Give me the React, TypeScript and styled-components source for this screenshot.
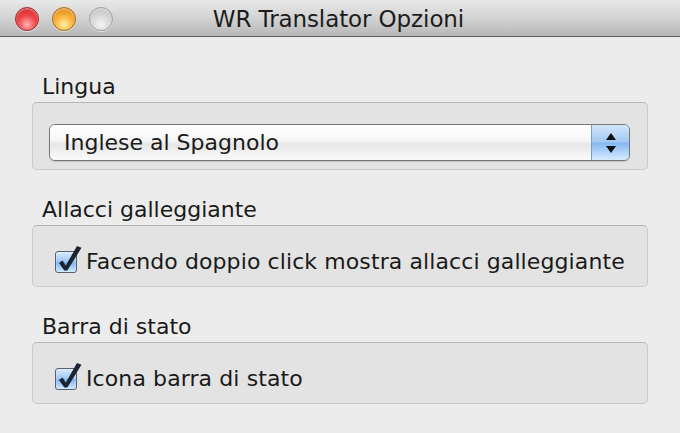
import styled, { createGlobalStyle } from "styled-components";

const GlobalStyle = createGlobalStyle`
  html, body {
    margin: 0;
    padding: 0;
    background: #ececec;
  }
  body {
    font-family: "DejaVu Sans", "Liberation Sans", sans-serif;
    color: #1a1a1a;
  }
`;

const Window = styled.div`
  width: 680px;
  height: 433px;
  background: #ececec;
  display: flex;
  flex-direction: column;
  overflow: hidden;
`;

const TitleBar = styled.div`
  height: 36px;
  flex-shrink: 0;
  position: relative;
  display: flex;
  align-items: center;
  justify-content: center;
  background: linear-gradient(#e9e9e9, #d2d2d2 50%, #b8b8b8);
  border-bottom: 1px solid #5e5e5e;
`;

const Lights = styled.div`
  position: absolute;
  left: 15px;
  top: 7px;
  display: flex;
  gap: 13px;
`;

const Light = styled.div<{ $tone: "red" | "orange" | "gray" }>`
  width: 24px;
  height: 24px;
  border-radius: 50%;
  box-sizing: border-box;
  border: 1px solid
    ${(p) =>
      p.$tone === "red" ? "#9c2a2a" : p.$tone === "orange" ? "#a5681a" : "#a0a0a0"};
  background: ${(p) =>
    p.$tone === "red"
      ? "radial-gradient(circle at 50% 75%, #ffb3b3 0%, #f0464a 45%, #c41d24 100%)"
      : p.$tone === "orange"
      ? "radial-gradient(circle at 50% 75%, #fff0a0 0%, #f8b23a 45%, #d37a12 100%)"
      : "radial-gradient(circle at 50% 75%, #f4f4f4 0%, #d6d6d6 50%, #b8b8b8 100%)"};
  box-shadow: inset 0 1px 2px rgba(255, 255, 255, 0.6), 0 1px 0 rgba(255, 255, 255, 0.5);
`;

const Title = styled.div`
  font-size: 23px;
  color: #1c1c1c;
  letter-spacing: -0.1px;
  padding-right: 3px;
  margin-top: 1px;
`;

const Content = styled.div`
  padding: 37px 32px 0 32px;
  display: flex;
  flex-direction: column;
  gap: 27px;
`;

const Section = styled.div`
  display: flex;
  flex-direction: column;
  gap: 2px;
`;

const Label = styled.div`
  font-size: 22px;
  line-height: 26px;
  padding-left: 10px;
`;

const GroupBox = styled.div<{ $h: number; $top: number }>`
  height: ${(p) => p.$h}px;
  box-sizing: border-box;
  background: #e3e3e3;
  border: 1px solid #c9c9c9;
  border-top-color: #b5b5b5;
  border-radius: 5px;
  display: flex;
  align-items: flex-start;
  padding: ${(p) => p.$top}px 17px 0 16px;
`;

const Popup = styled.div`
  flex: 1;
  height: 37px;
  box-sizing: border-box;
  border: 1px solid #777;
  border-radius: 6px;
  display: flex;
  overflow: hidden;
  box-shadow: 0 1px 1px rgba(0, 0, 0, 0.15);
`;

const PopupText = styled.div`
  flex: 1;
  display: flex;
  align-items: center;
  padding-left: 14px;
  font-size: 22px;
  background: linear-gradient(#ffffff, #f6f6f6 45%, #e6e6e6 55%, #fbfbfb);
`;

const Stepper = styled.div`
  width: 37px;
  display: flex;
  align-items: center;
  justify-content: center;
  border-left: 1px solid #7c9cc4;
  background: linear-gradient(#d2e6fb, #a3c9f3 48%, #86b9f0 52%, #d6ecff);
`;

const CheckRow = styled.label`
  display: flex;
  align-items: center;
  gap: 9px;
  padding-left: 6px;
  font-size: 22px;
  line-height: 26px;
  letter-spacing: 0.1px;
`;

const Box = styled.span`
  position: relative;
  width: 22px;
  height: 22px;
  box-sizing: border-box;
  border: 1px solid #56606e;
  border-radius: 3px;
  background: linear-gradient(#d8eafc, #9ec7f3 48%, #80b5f0 52%, #cbe7fd);
  box-shadow: inset 0 0 2px rgba(255, 255, 255, 0.7);
  flex-shrink: 0;
`;

const Tick = styled.svg`
  position: absolute;
  left: 1px;
  top: -7px;
`;

function Check() {
  return (
    <Box>
      <Tick width="25" height="27" viewBox="0 0 25 27">
        <path
          d="M2 18 L5.5 15.5 L8.8 20.5 L20 1 L24.5 2.8 L10.3 25.5 L7.3 25.5 Z"
          fill="#1c2331"
        />
      </Tick>
    </Box>
  );
}

export default function App() {
  return (
    <>
      <GlobalStyle />
      <Window>
        <TitleBar>
          <Lights>
            <Light $tone="red" />
            <Light $tone="orange" />
            <Light $tone="gray" />
          </Lights>
          <Title>WR Translator Opzioni</Title>
        </TitleBar>
        <Content>
          <Section>
            <Label>Lingua</Label>
            <GroupBox $h={68} $top={21}>
              <Popup>
                <PopupText>Inglese al Spagnolo</PopupText>
                <Stepper>
                  <svg width="12" height="24" viewBox="0 0 12 24">
                    <path d="M6 2 L11 9 L1 9 Z" fill="#111" />
                    <path d="M1 15 L11 15 L6 22 Z" fill="#111" />
                  </svg>
                </Stepper>
              </Popup>
            </GroupBox>
          </Section>
          <Section>
            <Label>Allacci galleggiante</Label>
            <GroupBox $h={62} $top={23}>
              <CheckRow>
                <Check />
                Facendo doppio click mostra allacci galleggiante
              </CheckRow>
            </GroupBox>
          </Section>
          <Section>
            <Label>Barra di stato</Label>
            <GroupBox $h={62} $top={23}>
              <CheckRow>
                <Check />
                Icona barra di stato
              </CheckRow>
            </GroupBox>
          </Section>
        </Content>
      </Window>
    </>
  );
}
